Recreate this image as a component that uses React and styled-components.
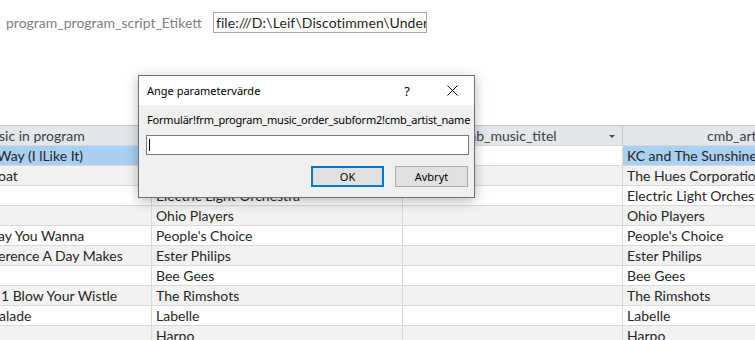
import React from 'react';
import styled, { createGlobalStyle } from 'styled-components';

const Global = createGlobalStyle`
  html, body { margin: 0; padding: 0; background: #fff; overflow: hidden; }
  #root { width: 755px; height: 340px; }
`;

const Page = styled.div`
  position: relative;
  width: 755px;
  height: 340px;
  overflow: hidden;
  background: #fff;
  font-family: Lato, "Open Sans", sans-serif;
`;

const TopRow = styled.div`
  display: flex;
  align-items: center;
  height: 21px;
  padding: 12px 0 0 6px;
  gap: 11px;
`;

const FieldLabel = styled.span`
  font-size: 14px;
  color: #808080;
  white-space: nowrap;
`;

const FieldBox = styled.div`
  box-sizing: border-box;
  width: 214px;
  height: 21px;
  border: 1px solid #a6a6a6;
  padding-left: 2px;
  font-size: 14px;
  letter-spacing: 0.1px;
  line-height: 19px;
  color: #262626;
  white-space: nowrap;
  overflow: hidden;
`;

const Sheet = styled.div`
  margin-top: 92px;
  width: 755px;
  overflow: hidden;
`;

const Grid = styled.div`
  display: grid;
  grid-template-columns: 152px 251px 220px 300px;
  box-sizing: border-box;
  height: ${p => (p.$head ? 21 : 20)}px;
  border-bottom: 1px solid #d9d9d9;
  border-top: ${p => (p.$head ? '1px solid #c8c8c8' : 'none')};
  background: ${p => (p.$head ? '#e3e6ea' : p.$alt ? '#f2f2f2' : '#ffffff')};
`;

const Cell = styled.div`
  position: relative;
  box-sizing: border-box;
  border-right: 1px solid ${p => (p.$head ? '#c8c8c8' : '#d9d9d9')};
  padding-left: ${p => (p.$pad ?? 4)}px;
  font-size: 14px;
  line-height: 19px;
  color: ${p => (p.$head ? '#404040' : '#262626')};
  white-space: nowrap;
  overflow: hidden;
  background: ${p => (p.$sel ? '#a9cff2' : 'transparent')};
`;

const Clip = styled.span`
  display: inline-block;
  margin-left: ${p => p.$shift || 0}px;
`;

const DropArrow = styled.span`
  position: absolute;
  right: 7px;
  top: 9px;
  width: 0;
  height: 0;
  border-left: 3px solid transparent;
  border-right: 3px solid transparent;
  border-top: 3px solid #4a4a4a;
`;

const Dialog = styled.div`
  position: absolute;
  left: 138px;
  top: 75px;
  width: 337px;
  height: 123px;
  box-sizing: border-box;
  border: 1px solid #707070;
  background: #f0f0f0;
  box-shadow: 0 3px 12px rgba(0, 0, 0, 0.28);
  font-family: "Noto Sans", "Open Sans", sans-serif;
  display: flex;
  flex-direction: column;
`;

const TitleBar = styled.div`
  height: 29px;
  background: #fff;
  display: flex;
  align-items: center;
  padding-left: 8px;
`;

const Title = styled.span`
  flex: 1;
  font-size: 11px;
  color: #000;
`;

const TitleBtn = styled.span`
  width: ${p => p.$w}px;
  display: flex;
  justify-content: center;
  align-items: center;
  font-size: 13px;
  color: #000;
`;

const Body = styled.div`
  display: flex;
  flex-direction: column;
  padding: 6px 5px 0 7px;
`;

const Prompt = styled.div`
  font-size: 11px;
  letter-spacing: -0.2px;
  color: #000;
  white-space: nowrap;
  height: 17px;
  line-height: 17px;
  padding-left: 1px;
`;

const Input = styled.div`
  margin-top: 7px;
  box-sizing: border-box;
  width: 323px;
  height: 20px;
  background: #fff;
  border: 1px solid #7a7a7a;
  display: flex;
  align-items: center;
  padding-left: 2px;
`;

const Caret = styled.span`
  width: 1px;
  height: 12px;
  background: #000;
`;

const Buttons = styled.div`
  margin-top: 11px;
  display: flex;
  justify-content: flex-end;
  gap: 11px;
  padding-right: 1px;
`;

const Btn = styled.div`
  box-sizing: border-box;
  width: 73px;
  height: 21px;
  background: #e1e1e1;
  border: ${p => (p.$default ? '2px solid #0078d7' : '1px solid #adadad')};
  display: flex;
  align-items: center;
  justify-content: center;
  font-size: 11px;
  color: #000;
`;

const rows = [
  { t: 'Way (I lLike It)', s: -3, a: 'KC and The Sunshine Band', b: 'KC and The Sunshine Band', sel: true },
  { t: 'oat', s: -2, a: 'The Hues Corporation', b: 'The Hues Corporation' },
  { t: '', s: 0, a: 'Electric Light Orchestra', b: 'Electric Light Orchestra' },
  { t: '', s: 0, a: 'Ohio Players', b: 'Ohio Players' },
  { t: 'ay You Wanna', s: -2, a: "People's Choice", b: "People's Choice" },
  { t: 'erence A Day Makes', s: -2, a: 'Ester Philips', b: 'Ester Philips' },
  { t: '', s: 0, a: 'Bee Gees', b: 'Bee Gees' },
  { t: '1 Blow Your Wistle', s: 1, a: 'The Rimshots', b: 'The Rimshots' },
  { t: 'alade', s: -1, a: 'Labelle', b: 'Labelle' },
  { t: '', s: 0, a: 'Harpo', b: 'Harpo' },
];

export default function App() {
  return (
    <Page>
      <Global />
      <TopRow>
        <FieldLabel>program_program_script_Etikett</FieldLabel>
        <FieldBox>file:///D:\Leif\Discotimmen\Underlag\program.txt</FieldBox>
      </TopRow>
      <Sheet>
        <Grid $head>
          <Cell $head $pad={0}><Clip $shift={-1}>sic in program</Clip></Cell>
          <Cell $head>artist_name</Cell>
          <Cell $head $pad={55}>cmb_music_titel<DropArrow /></Cell>
          <Cell $head $pad={84}>cmb_artist_name</Cell>
        </Grid>
        {rows.map((r, i) => (
          <Grid key={i} $alt={i % 2 === 1}>
            <Cell $sel={r.sel} $pad={0}><Clip $shift={r.s}>{r.t}</Clip></Cell>
            <Cell $sel={r.sel}>{r.a}</Cell>
            <Cell />
            <Cell $sel={r.sel}>{r.b}</Cell>
          </Grid>
        ))}
      </Sheet>
      <Dialog>
        <TitleBar>
          <Title>Ange parametervärde</Title>
          <TitleBtn $w={46}>?</TitleBtn>
          <TitleBtn $w={44}>
            <svg width="11" height="11" viewBox="0 0 11 11">
              <path d="M0.5 0.5 L10.5 10.5 M10.5 0.5 L0.5 10.5" stroke="#000" strokeWidth="1" fill="none" />
            </svg>
          </TitleBtn>
        </TitleBar>
        <Body>
          <Prompt>Formulär!frm_program_music_order_subform2!cmb_artist_name</Prompt>
          <Input><Caret /></Input>
          <Buttons>
            <Btn $default>OK</Btn>
            <Btn>Avbryt</Btn>
          </Buttons>
        </Body>
      </Dialog>
    </Page>
  );
}
